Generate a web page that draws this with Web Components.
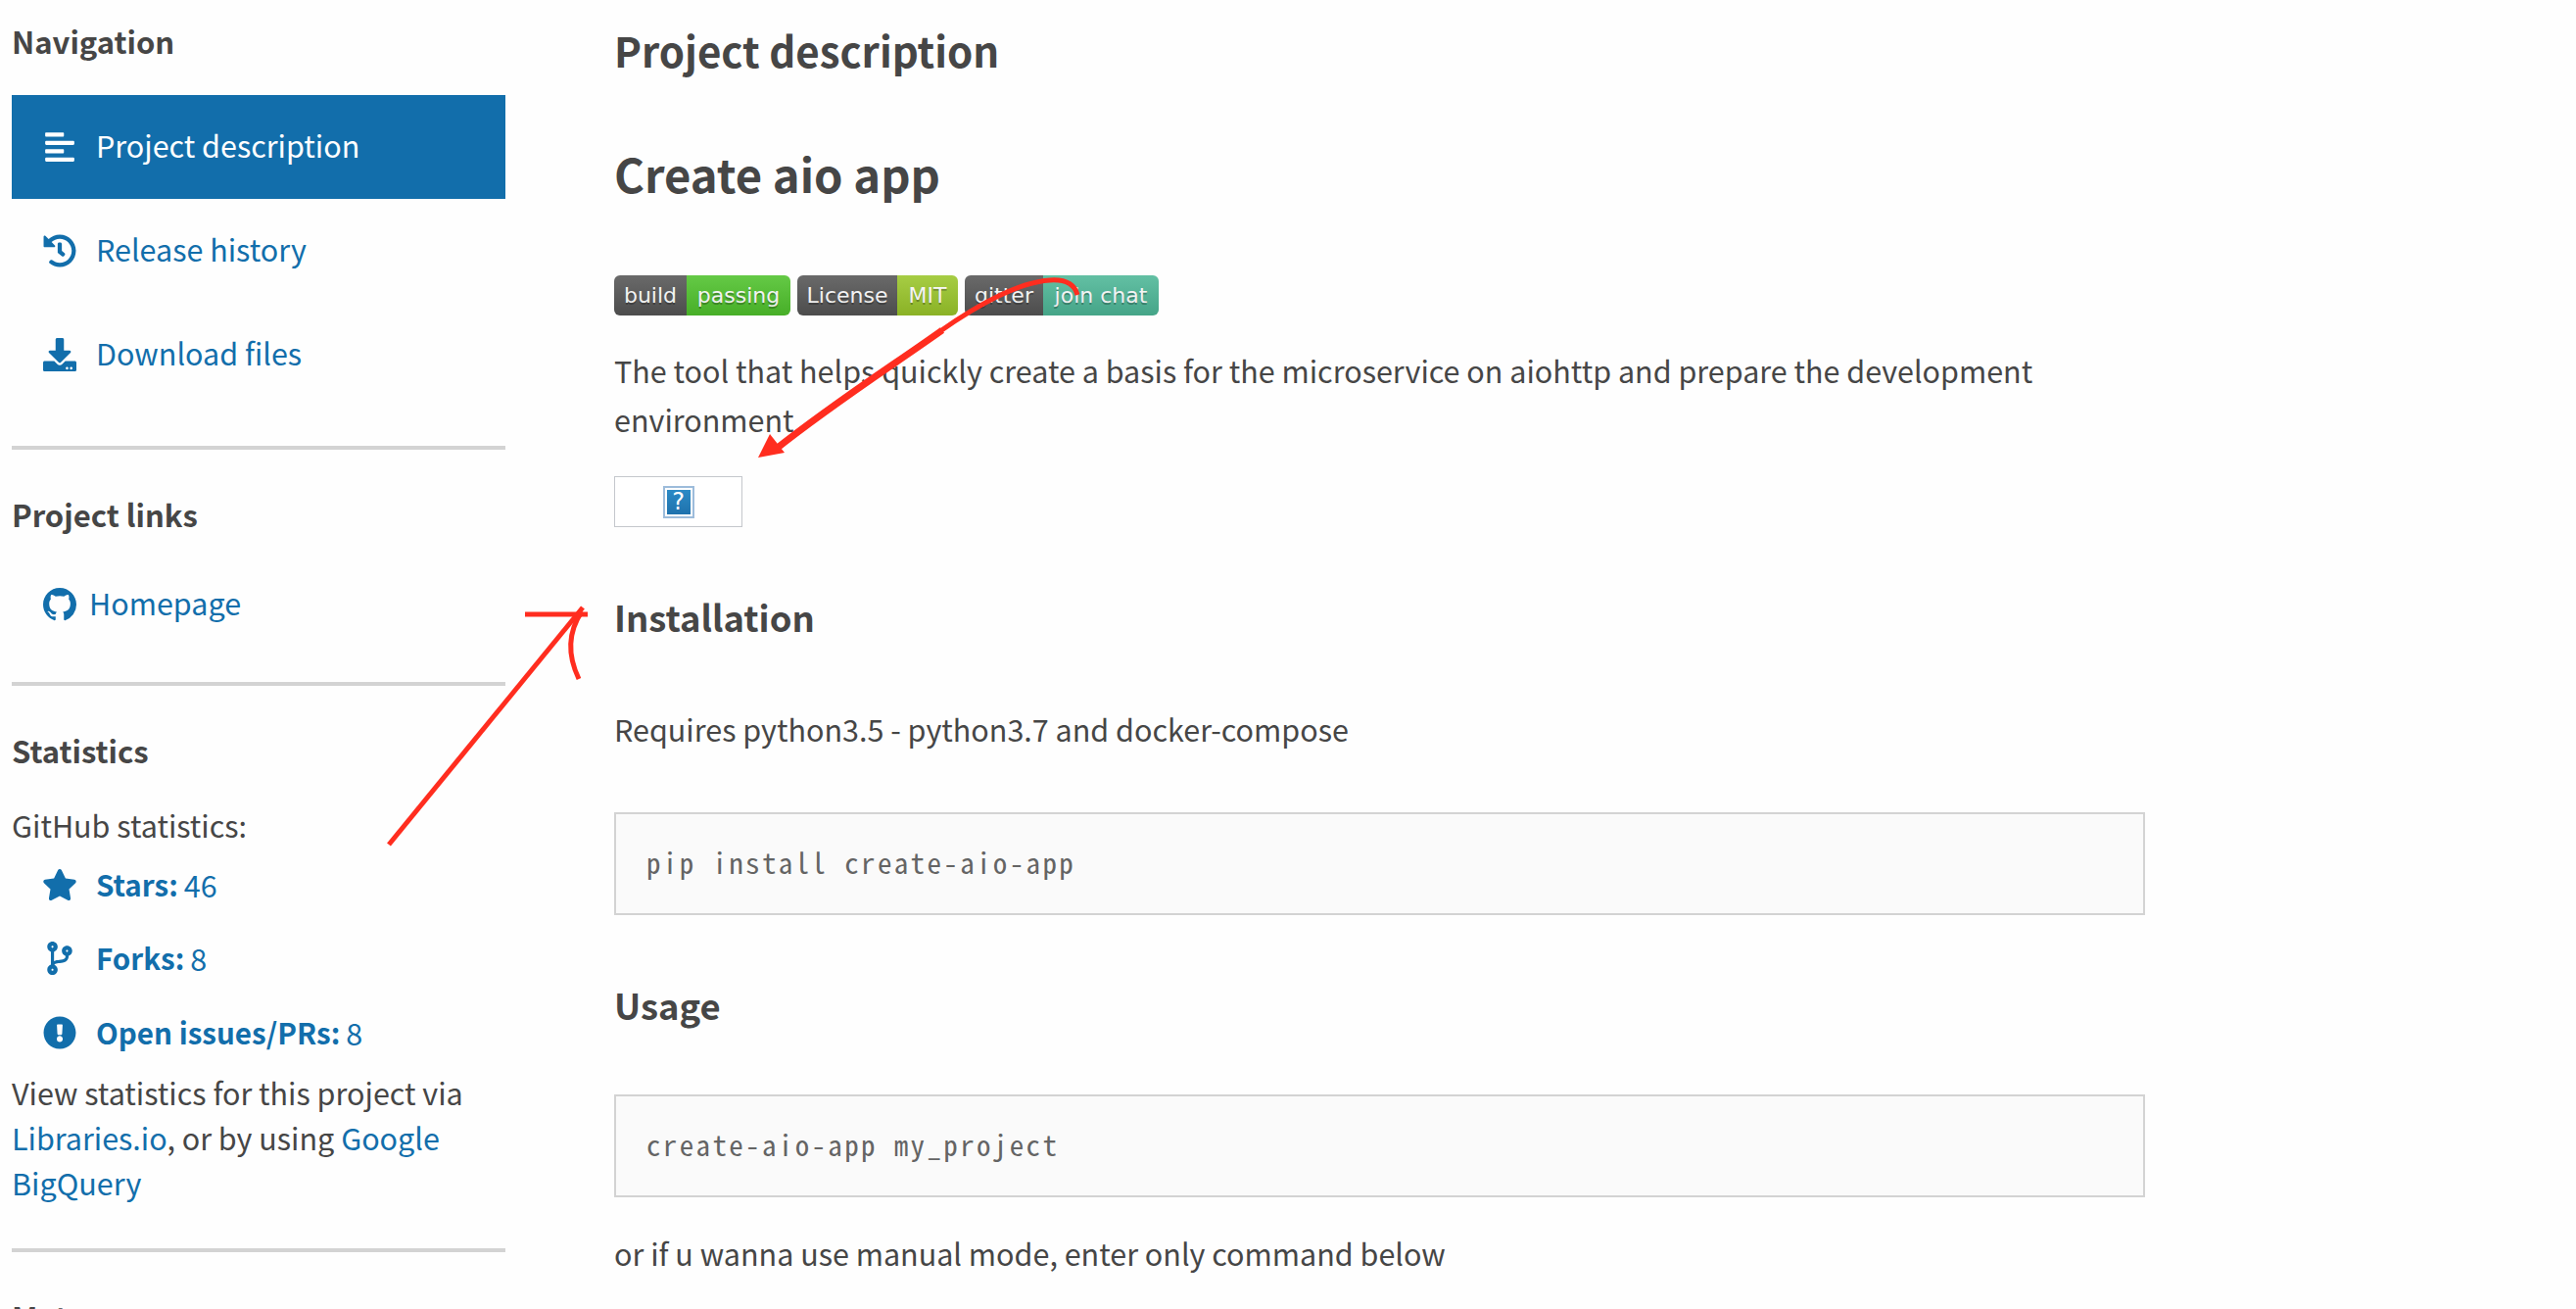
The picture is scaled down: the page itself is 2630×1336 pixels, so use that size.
<!DOCTYPE html>
<html>
<head>
<meta charset="utf-8">
<title>create-aio-app</title>
<style>
  html, body { margin: 0; padding: 0; background: #fefefe; }
  body { height: 1336px; overflow: hidden; position: relative; font-family: "Noto Sans CJK JP", "Noto Sans", sans-serif; color: #464646; }
</style>
</head>
<body>
<project-page>
  <side-section slot="side" title="Navigation" first>
    <nav-tab icon="align" active>Project description</nav-tab>
    <nav-tab icon="history">Release history</nav-tab>
    <nav-tab icon="download">Download files</nav-tab>
  </side-section>
  <side-section slot="side" title="Project links">
    <nav-tab icon="github" narrow>Homepage</nav-tab>
  </side-section>
  <side-section slot="side" title="Statistics">
    <stat-list>
      <span slot="head">GitHub statistics:</span>
      <stat-row icon="star" label="Stars:" value="46"></stat-row>
      <stat-row icon="fork" label="Forks:" value="8"></stat-row>
      <stat-row icon="issue" label="Open issues/PRs:" value="8"></stat-row>
      <span slot="foot">View statistics for this project via <blue-link>Libraries.io</blue-link>, or by using <blue-link>Google BigQuery</blue-link></span>
    </stat-list>
  </side-section>
  <side-section slot="side" title="Meta"></side-section>

  <desc-block slot="main">
    <desc-head level="1">Project description</desc-head>
    <desc-head level="2">Create aio app</desc-head>
    <badge-row>
      <repo-badge left="build" right="passing" lw="74" rw="106" color="#4fc22c"></repo-badge>
      <repo-badge left="License" right="MIT" lw="102" rw="62" color="#9ac62a"></repo-badge>
      <repo-badge left="gitter" right="join chat" lw="80" rw="118" color="#4db797"></repo-badge>
    </badge-row>
    <desc-text lead>The tool that helps quickly create a basis for the microservice on aiohttp and prepare the development environment</desc-text>
    <broken-image></broken-image>
    <desc-head level="3">Installation</desc-head>
    <desc-text gap>Requires python3.5 - python3.7 and docker-compose</desc-text>
    <code-block>pip install create-aio-app</code-block>
    <desc-head level="4">Usage</desc-head>
    <code-block>create-aio-app my_project</code-block>
    <desc-text last>or if u wanna use manual mode, enter only command below</desc-text>
  </desc-block>
</project-page>
<red-marks></red-marks>

<script>
  const ICONS = {
    align: ['0 0 448 512', 'M12.83 352h262.34A12.82 12.82 0 0 0 288 339.17v-38.34A12.82 12.82 0 0 0 275.17 288H12.83A12.82 12.82 0 0 0 0 300.83v38.34A12.82 12.82 0 0 0 12.83 352zm0-256h262.34A12.82 12.82 0 0 0 288 83.17V44.83A12.82 12.82 0 0 0 275.17 32H12.83A12.82 12.82 0 0 0 0 44.83v38.34A12.82 12.82 0 0 0 12.83 96zM432 160H16a16 16 0 0 0-16 16v32a16 16 0 0 0 16 16h416a16 16 0 0 0 16-16v-32a16 16 0 0 0-16-16zm0 256H16a16 16 0 0 0-16 16v32a16 16 0 0 0 16 16h416a16 16 0 0 0 16-16v-32a16 16 0 0 0-16-16z'],
    history: ['0 0 512 512', 'M504 255.531c.253 136.64-111.18 248.372-247.82 248.468-59.015.042-113.223-20.53-155.822-54.911-11.077-8.94-11.905-25.541-1.839-35.607l11.267-11.267c8.609-8.609 22.353-9.551 31.891-1.984C173.062 425.135 212.781 440 256 440c101.705 0 184-82.311 184-184 0-101.705-82.311-184-184-184-48.814 0-93.149 18.969-126.068 49.932l50.754 50.754c10.08 10.08 2.941 27.314-11.313 27.314H24c-8.837 0-16-7.163-16-16V38.627c0-14.254 17.234-21.393 27.314-11.314l49.372 49.372C129.209 34.136 189.552 8 256 8c136.81 0 247.747 110.78 248 247.531zm-180.912 78.784l9.823-12.63c8.138-10.463 6.253-25.542-4.21-33.679L288 256.349V152c0-13.255-10.745-24-24-24h-16c-13.255 0-24 10.745-24 24v135.651l65.409 50.874c10.463 8.137 25.541 6.253 33.679-4.21z'],
    download: ['0 0 512 512', 'M216 0h80c13.3 0 24 10.7 24 24v168h87.7c17.8 0 26.7 21.5 14.1 34.1L269.7 378.3c-7.5 7.5-19.8 7.5-27.3 0L90.1 226.1c-12.6-12.6-3.7-34.1 14.1-34.1H192V24c0-13.3 10.7-24 24-24zm296 376v112c0 13.3-10.7 24-24 24H24c-13.3 0-24-10.7-24-24V376c0-13.3 10.7-24 24-24h146.7l49 49c20.1 20.1 52.5 20.1 72.6 0l49-49H488c13.3 0 24 10.7 24 24zm-124 88c0-11-9-20-20-20s-20 9-20 20 9 20 20 20 20-9 20-20zm64 0c0-11-9-20-20-20s-20 9-20 20 9 20 20 20 20-9 20-20z'],
    github: ['0 0 16 16', 'M8 0C3.58 0 0 3.58 0 8c0 3.54 2.29 6.53 5.47 7.59.4.07.55-.17.55-.38 0-.19-.01-.82-.01-1.49-2.01.37-2.53-.49-2.69-.94-.09-.23-.48-.94-.82-1.13-.28-.15-.68-.52-.01-.53.63-.01 1.08.58 1.23.82.72 1.21 1.87.87 2.33.66.07-.52.28-.87.51-1.07-1.78-.2-3.64-.89-3.64-3.95 0-.87.31-1.59.82-2.15-.08-.2-.36-1.02.08-2.12 0 0 .67-.21 2.2.82.64-.18 1.32-.27 2-.27.68 0 1.36.09 2 .27 1.53-1.04 2.2-.82 2.2-.82.44 1.1.16 1.92.08 2.12.51.56.82 1.27.82 2.15 0 3.07-1.87 3.75-3.65 3.95.29.25.54.73.54 1.48 0 1.07-.01 1.93-.01 2.2 0 .21.15.46.55.38A8.013 8.013 0 0016 8c0-4.42-3.58-8-8-8z'],
    star: ['0 0 576 512', 'M259.3 17.8L194 150.2 47.9 171.5c-26.2 3.8-36.7 36.1-17.7 54.6l105.7 103-25 145.5c-4.5 26.3 23.2 46 46.4 33.7L288 439.6l130.7 68.7c23.2 12.2 50.9-7.4 46.4-33.7l-25-145.5 105.7-103c19-18.5 8.5-50.8-17.7-54.6L382 150.2 316.7 17.8c-11.7-23.6-45.6-23.9-57.4 0z'],
    fork: ['0 0 384 512', 'M384 144c0-44.2-35.8-80-80-80s-80 35.8-80 80c0 36.4 24.3 67.1 57.5 76.8-.6 16.1-4.2 28.5-11 36.9-15.4 19.2-49.3 22.4-85.2 25.7-28.2 2.6-57.4 5.4-81.3 16.9v-144c32.5-10.2 56-40.5 56-76.3 0-44.2-35.8-80-80-80S0 35.8 0 80c0 35.8 23.5 66.1 56 76.3v199.3C23.5 365.9 0 396.2 0 432c0 44.2 35.8 80 80 80s80-35.8 80-80c0-34-21.2-63.1-51.2-74.6 3.1-5.2 7.8-9.8 14.9-13.4 16.2-8.2 40.4-10.4 66.1-12.8 42.2-3.9 90-8.4 118.2-43.4 14-17.4 21.1-39.8 21.6-67.9 31.6-10.8 54.4-40.7 54.4-75.9zM80 64c8.8 0 16 7.2 16 16s-7.2 16-16 16-16-7.2-16-16 7.2-16 16-16zm0 384c-8.8 0-16-7.2-16-16s7.2-16 16-16 16 7.2 16 16-7.2 16-16 16zm224-320c8.8 0 16 7.2 16 16s-7.2 16-16 16-16-7.2-16-16 7.2-16 16-16z'],
    issue: ['0 0 512 512', 'M504 256c0 136.997-111.043 248-248 248S8 392.997 8 256C8 119.083 119.043 8 256 8s248 111.083 248 248zm-248 50c-25.405 0-46 20.595-46 46s20.595 46 46 46 46-20.595 46-46-20.595-46-46-46zm-43.673-165.346l7.418 136c.347 6.364 5.609 11.346 11.982 11.346h48.546c6.373 0 11.635-4.982 11.982-11.346l7.418-136c.375-6.874-5.098-12.654-11.982-12.654h-63.383c-6.884 0-12.356 5.78-11.981 12.654z']
  };
  const BLUE = '#126eab';

  function iconSvg(name) {
    const ic = ICONS[name];
    return `<svg viewBox="${ic[0]}" fill="currentColor"><path d="${ic[1]}"/></svg>`;
  }

  class ProjectPage extends HTMLElement {
    constructor() {
      super();
      this.attachShadow({mode:'open'}).innerHTML = `
        <style>
          :host { display: grid; grid-template-columns: 504px 1563px; column-gap: 111px; padding-left: 12px; }
          .side, .main { display: block; min-width: 0; }
        </style>
        <div class="side"><slot name="side"></slot></div>
        <div class="main"><slot name="main"></slot></div>`;
    }
  }
  customElements.define('project-page', ProjectPage);

  class SideSection extends HTMLElement {
    constructor() {
      super();
      this.attachShadow({mode:'open'}).innerHTML = `
        <style>
          :host { display: block; border-bottom: 4px solid #d3d3d3; padding: 0 0 40px; margin-bottom: 43px; }
          :host([first]) { padding-top: 19px; }
          :host([title="Project links"]) { padding-bottom: 26px; }
          :host([title="Statistics"]) { padding-bottom: 44px; }
          h3 { margin: 0 0 16px; font: 700 31px/46px "Noto Sans CJK JP", "Noto Sans", sans-serif; color: #464646; }
          :host([first]) h3 { margin-bottom: 32px; }
          :host([title="Statistics"]) h3 { margin-bottom: 30px; }
        </style>
        <h3></h3><slot></slot>`;
    }
    connectedCallback() {
      this.shadowRoot.querySelector('h3').textContent = this.getAttribute('title');
    }
  }
  customElements.define('side-section', SideSection);

  class NavTab extends HTMLElement {
    constructor() {
      super();
      this.attachShadow({mode:'open'}).innerHTML = `
        <style>
          :host { display: flex; align-items: center; height: 106px; padding-left: 31px; color: ${BLUE}; font-size: 30.5px; }
          :host([active]) { background: ${BLUE}; color: #fff; }
          .i { width: 36px; height: 36px; margin-right: 19px; display: flex; align-items: center; justify-content: center; }
          :host([narrow]) .i { margin-right: 12px; }
          svg { height: 34px; width: 34px; display: block; }
          .t { position: relative; top: -2px; }
        </style>
        <span class="i"></span><span class="t"><slot></slot></span>`;
    }
    connectedCallback() {
      this.shadowRoot.querySelector('.i').innerHTML = iconSvg(this.getAttribute('icon'));
    }
  }
  customElements.define('nav-tab', NavTab);

  class StatList extends HTMLElement {
    constructor() {
      super();
      this.attachShadow({mode:'open'}).innerHTML = `
        <style>
          :host { display: block; font-size: 30.5px; line-height: 46px; }
        </style>
        <div><slot name="head"></slot></div>
        <slot></slot>
        <div><slot name="foot"></slot></div>`;
    }
  }
  customElements.define('stat-list', StatList);

  class StatRow extends HTMLElement {
    constructor() {
      super();
      this.attachShadow({mode:'open'}).innerHTML = `
        <style>
          :host { display: flex; align-items: center; height: 75.5px; padding-left: 31px; color: ${BLUE}; font-size: 30.5px; }
          .i { width: 36px; height: 36px; margin-right: 19px; display: flex; align-items: center; justify-content: center; }
          svg { height: 34px; width: 36px; display: block; }
          b { font-weight: 700; font-size: 29.6px; margin-right: 6px; }
        </style>
        <span class="i"></span><b></b><span class="v"></span>`;
    }
    connectedCallback() {
      this.shadowRoot.querySelector('.i').innerHTML = iconSvg(this.getAttribute('icon'));
      this.shadowRoot.querySelector('b').textContent = this.getAttribute('label');
      this.shadowRoot.querySelector('.v').textContent = this.getAttribute('value');
    }
  }
  customElements.define('stat-row', StatRow);

  class BlueLink extends HTMLElement {
    constructor() {
      super();
      this.attachShadow({mode:'open'}).innerHTML = `<style>:host { display: inline; color: ${BLUE}; }</style><slot></slot>`;
    }
  }
  customElements.define('blue-link', BlueLink);

  class DescBlock extends HTMLElement {
    constructor() {
      super();
      this.attachShadow({mode:'open'}).innerHTML = `<style>:host { display: block; padding-top: 20px; }</style><slot></slot>`;
    }
  }
  customElements.define('desc-block', DescBlock);

  class DescHead extends HTMLElement {
    constructor() {
      super();
      this.attachShadow({mode:'open'}).innerHTML = `
        <style>
          :host { display: block; font-weight: 700; color: #464646; line-height: 62px; }
          :host([level="1"]) { font-size: 42px; margin-bottom: 64px; }
          :host([level="2"]) { font-size: 47.2px; margin-bottom: 73px; }
          :host([level="3"]) { font-size: 36.4px; margin: 60px 0 59px; }
          :host([level="4"]) { font-size: 36.4px; margin: 60px 0 61px; }
        </style>
        <slot></slot>`;
    }
  }
  customElements.define('desc-head', DescHead);

  class BadgeRow extends HTMLElement {
    constructor() {
      super();
      this.attachShadow({mode:'open'}).innerHTML = `<style>:host { display: flex; gap: 7px; height: 41px; }</style><slot></slot>`;
    }
  }
  customElements.define('badge-row', BadgeRow);

  class RepoBadge extends HTMLElement {
    constructor() {
      super();
      this.attachShadow({mode:'open'}).innerHTML = `
        <style>
          :host { display: flex; height: 41px; border-radius: 6px; overflow: hidden; position: relative; color: #fff;
            font: 22px/41px "DejaVu Sans", Verdana, sans-serif; text-shadow: 0 2px 0 rgba(1,1,1,.3); }
          :host::after { content: ""; position: absolute; inset: 0; background: linear-gradient(rgba(255,255,255,.12), rgba(0,0,0,.1)); }
          span { display: block; text-align: center; white-space: nowrap; }
          .l { background: #555; }
        </style>
        <span class="l"></span><span class="r"></span>`;
    }
    connectedCallback() {
      const l = this.shadowRoot.querySelector('.l');
      const r = this.shadowRoot.querySelector('.r');
      l.textContent = this.getAttribute('left');
      r.textContent = this.getAttribute('right');
      l.style.width = this.getAttribute('lw') + 'px';
      r.style.width = this.getAttribute('rw') + 'px';
      r.style.background = this.getAttribute('color');
    }
  }
  customElements.define('repo-badge', RepoBadge);

  class DescText extends HTMLElement {
    constructor() {
      super();
      this.attachShadow({mode:'open'}).innerHTML = `
        <style>
          :host { display: block; font-size: 30.5px; line-height: 50px; color: #464646; }
          :host([lead]) { margin: 31px 0 33px; }
          :host([gap]) { margin-bottom: 60px; }
        </style>
        <slot></slot>`;
    }
  }
  customElements.define('desc-text', DescText);

  class BrokenImage extends HTMLElement {
    constructor() {
      super();
      this.attachShadow({mode:'open'}).innerHTML = `
        <style>
          :host { display: flex; align-items: center; justify-content: center; width: 129px; height: 50px; border: 1px solid #c4c7cc; background: #fff; }
          .q { width: 24px; height: 25px; border: 2px solid #fff; outline: 2px solid #9dbcdb; background: linear-gradient(#2b8ac6, #1f72ad);
            color: #fff; font: 24px/25px "DejaVu Sans", sans-serif; text-align: center; }
        </style>
        <div class="q">?</div>`;
    }
  }
  customElements.define('broken-image', BrokenImage);

  class CodeBlock extends HTMLElement {
    constructor() {
      super();
      this.attachShadow({mode:'open'}).innerHTML = `
        <style>
          :host { display: flex; align-items: center; box-sizing: border-box; height: 105px; padding: 0 31px 6px; border: 2px solid #d3d3d3; background: #fafafa;
            font: 29px/40px "Noto Sans Mono CJK JP", "DejaVu Sans Mono", "Liberation Mono", monospace; letter-spacing: 2.35px; color: #646464; margin-bottom: 32px; }
        </style>
        <slot></slot>`;
    }
  }
  customElements.define('code-block', CodeBlock);

  // hand drawn arrows lying over the page
  class RedMarks extends HTMLElement {
    constructor() {
      super();
      this.attachShadow({mode:'open'}).innerHTML = `
        <style>
          :host { position: absolute; left: 0; top: 0; width: 2630px; height: 1336px; pointer-events: none; }
          svg { display: block; }
          path { fill: none; stroke: #ff2d1f; stroke-width: 5; }
        </style>
        <svg width="2630" height="1336" viewBox="0 0 2630 1336">
          <path d="M1100 301C1097 290 1087 285 1072 286C1040 288 1000 310 960 338"/>
          <path d="M962 337C910 374 850 412 790 460" style="stroke-width:7"/>
          <polygon points="774,467 786,443 801,462" fill="#ff2d1f"/>
          <path d="M397 862L595 620"/>
          <path d="M536 627H600"/>
          <path d="M594 624C580 645 579 668 591 693"/>
        </svg>`;
    }
  }
  customElements.define('red-marks', RedMarks);
</script>
</body>
</html>
